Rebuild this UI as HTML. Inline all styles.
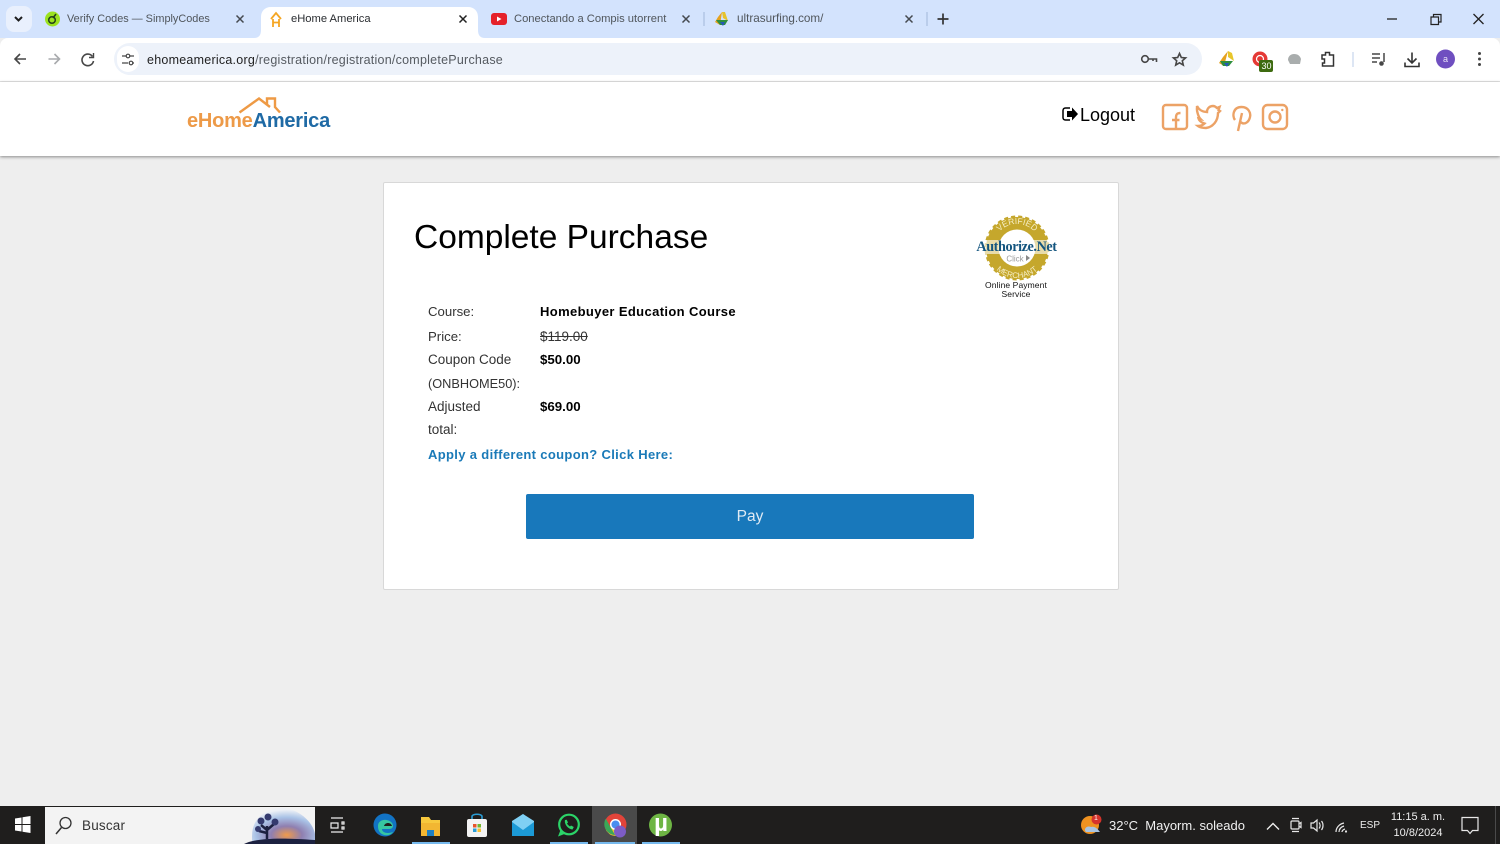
<!DOCTYPE html>
<html><head><meta charset="utf-8"><title>eHome America</title>
<style>
html,body{margin:0;padding:0;width:1500px;height:844px;overflow:hidden;background:#eeeeee;font-family:"Liberation Sans",sans-serif;}
.a{position:absolute;white-space:nowrap;}
svg{position:absolute;overflow:visible;}
.tab{font-size:11px;color:#50565c;line-height:14px;}
.row{font-size:13.500px;line-height:16px;color:#333;}
.b{font-weight:bold;color:#000;}
</style></head><body>
<!-- tab strip -->
<div class="a" style="left:0;top:0;width:1500px;height:38px;background:#d3e3fd"></div>
<div class="a" style="left:6px;top:6px;width:26px;height:26px;border-radius:8px;background:#e9f0fd"></div>
<svg style="left:0;top:0" width="1500" height="38">
<path d="M15 17l3.500 3.500 3.500-3.500" fill="none" stroke="#1f1f1f" stroke-width="2"/>
<path d="M254 38c5 0 7-3 7-8V17c0-6 4-10 10-10h197c6 0 10 4 10 10v13c0 5 2 8 7 8z" fill="#fff"/>
<circle cx="52.500" cy="19" r="7.500" fill="#9be21f"/><circle cx="52" cy="20" r="3.300" fill="none" stroke="#24401a" stroke-width="1.500"/><path d="M53 18l3-4" stroke="#24401a" stroke-width="1.500"/>
<path d="M271 19l5-6 5 6M273 19v8M279 19v8M273 22.500h6" fill="none" stroke="#f5a623" stroke-width="1.800"/>
<rect x="491" y="13" width="16" height="12" rx="3" fill="#e5212a"/><path d="M497 16.500l4.500 2.500-4.500 2.500z" fill="#fff"/>
<path d="M722 12l-4 5-3 5 5 3z" fill="#e5a21f"/><path d="M722 12l1 6 5 3-3-9z" fill="#e6c22b"/><path d="M716 20l12 0-3 5h-5z" fill="#2f8f3e"/><path d="M720 22h5l-2 4z" fill="#2559b5"/>
<g stroke="#454a50" stroke-width="1.500" fill="none"><path d="M236.500 15.500l7 7M243.500 15.500l-7 7"/><path d="M682.500 15.500l7 7M689.500 15.500l-7 7"/><path d="M905.500 15.500l7 7M912.500 15.500l-7 7"/></g>
<path d="M459.500 15.500l7 7M466.500 15.500l-7 7" stroke="#222" stroke-width="1.500"/>
<path d="M704 12v14M927 12v14" stroke="#a9bfdf" stroke-width="1.200"/>
<path d="M943 13.500v11M937.500 19h11" stroke="#333" stroke-width="1.700"/>
<path d="M1387 19h10" stroke="#222" stroke-width="1.300"/>
<path d="M1431 17h7.500v7.500h-7.500zM1433.500 17v-2.500h7.500v7.500h-2.500" fill="none" stroke="#222" stroke-width="1.200"/>
<path d="M1473.500 14l10 10M1483.500 14l-10 10" stroke="#222" stroke-width="1.300"/>
</svg>
<div class="a tab" style="left:67px;top:12px;font-size:10.900px">Verify Codes — SimplyCodes</div>
<div class="a tab" style="left:291px;top:12px;color:#2a2d31;font-size:11.200px">eHome America</div>
<div class="a tab" style="left:514px;top:12px;width:154px;overflow:hidden;font-size:11.200px">Conectando a Compis utorrent</div>
<div class="a tab" style="left:737px;top:12px;font-size:11.700px">ultrasurfing.com/</div>
<!-- toolbar -->
<div class="a" style="left:0;top:38px;width:1500px;height:43px;background:#fff;border-radius:8px 8px 0 0;border-bottom:1px solid #e3e3e3"></div>
<div class="a" style="left:114px;top:43px;width:1088px;height:32px;border-radius:16px;background:#edf2fa"></div>
<div class="a" style="left:117px;top:46px;width:22px;height:26px;border-radius:13px;background:#fff"></div>
<div class="a" style="left:147px;top:53px;font-size:12.500px;line-height:15px;color:#555a60;letter-spacing:.24px"><span style="color:#1f1f1f">ehomeamerica.org</span>/registration/registration/completePurchase</div>
<svg style="left:0;top:38px" width="1500" height="44">
<g fill="none" stroke="#474747" stroke-width="1.600">
<path d="M26 21H15.500M20 16l-5 5 5 5"/>
<path d="M92.500 18.500a5.800 5.800 0 1 0 1 4.500" /><path d="M93.500 15v4.500H89" stroke-width="1.400"/>
<path d="M122 18h4M130 18h4M122 25h6M133 25h1" stroke-width="1.200"/><circle cx="128" cy="18" r="1.800" stroke-width="1.200"/><circle cx="131" cy="25" r="1.800" stroke-width="1.200"/>
<circle cx="1145" cy="21" r="3.300" stroke-width="1.600"/><path d="M1148.500 21h8v3M1153 21v2"/>
<path d="M1179.500 15.500l1.800 4 4.300.4-3.300 2.900 1 4.300-3.800-2.300-3.800 2.300 1-4.300-3.300-2.900 4.300-.4z"/>
<path d="M1322 17h3.500v-2.500h4v2.500h4v11h-11v-3h2v-4h-2.500z" stroke-width="1.500" stroke="#333"/>
<path d="M1372 16h8M1372 20h8M1372 24h5" stroke-width="1.400"/><path d="M1384 15v9" stroke-width="1.500"/>
<path d="M1412 14.500v10M1407.500 20.500l4.500 4.500 4.500-4.500M1405 24.500v4h14v-4" stroke="#333"/>
</g>
<circle cx="1381.500" cy="25.500" r="2.300" fill="#474747"/>
<path d="M48.500 21H59M54.500 16l5 5-5 5" fill="none" stroke="#a8aaad" stroke-width="1.600"/>
<path d="M1228 13l-5 6-4 6 5 3z" fill="#e5a21f"/><path d="M1228 13l0 6 6 4-2-8z" fill="#e8c62b"/><path d="M1220 23h13l-4 5h-6z" fill="#2f8f3e"/><path d="M1224 25h5l-2 4z" fill="#2559b5"/>
<circle cx="1260" cy="21" r="7.500" fill="#e53935"/><circle cx="1260" cy="21" r="3.500" fill="none" stroke="#fff" stroke-width="1.200"/>
<rect x="1259" y="22" width="14" height="12" rx="2" fill="#3e6b10"/>
<path d="M1288 22c0-4 3-6 6-6 4 0 6 2 7 5l-1 5h-10z" fill="#a9adad"/>
<path d="M1353 14v15" stroke="#c6d6ec" stroke-width="1.200"/>
<circle cx="1445.500" cy="21" r="9.500" fill="#6f4fc0"/>
<circle cx="1479.500" cy="15.500" r="1.500" fill="#444"/><circle cx="1479.500" cy="21" r="1.500" fill="#444"/><circle cx="1479.500" cy="26.500" r="1.500" fill="#444"/>
</svg>
<div class="a" style="left:1261px;top:61px;width:11px;text-align:center;font-size:9px;line-height:11px;color:#fff">30</div>
<div class="a" style="left:1436px;top:53px;width:19px;text-align:center;font-size:9px;line-height:12px;color:#e9e2f7">a</div>
<!-- site header -->
<div class="a" style="left:0;top:82px;width:1500px;height:74px;background:#fff;box-shadow:0 1px 3px #8a8a8a"></div>
<svg style="left:0;top:82px" width="1500" height="74">
<path d="M239.500 30.500L259 16.500 270 25M267 22V16.500h8V25l5 5.500" fill="none" stroke="#ee9a45" stroke-width="2.400"/>
<g fill="none" stroke="#eca266" stroke-width="2.400">
<rect x="1163" y="23" width="24" height="24" rx="3"/>
<path d="M1176 47V35.500c0-3 1-4.500 4.500-4.500M1172 38h7.500"/>
<path d="M1197 24c2 4 6 6 10 6 0-4 3-6 6-6 2 0 3 1 4 2l2.500-1-1 3 1.500 1-2 2c0 8-5 14-12 15-3 0-6-.5-8-2 3 0 5-1 6.500-2.500-3-1-5.500-3-6-5l2 .5c-2-2-4-8-3.500-11z"/>
<path d="M1238 49l4-18M1235 38c-3-4-2-13 6.500-13 7 0 9.500 6 8.500 10-1 5-5 7.500-8 6-1-.5-1.500-1-2-2"/>
<rect x="1263" y="23" width="24" height="24" rx="4.500"/><circle cx="1275" cy="35" r="5.500"/>
</g>
<circle cx="1282.300" cy="28" r="1.200" fill="#eca266"/>
<path d="M1070 26h-4.500c-1.500 0-2.500 1-2.500 2.500v7c0 1.500 1 2.500 2.500 2.500h4.500" fill="none" stroke="#000" stroke-width="1.500"/>
<path d="M1067 29h5v-3.500l6 6.500-6 6.500v-3.500h-5z" fill="#000"/>
</svg>
<div class="a" style="left:187px;top:110px;font-size:20px;line-height:22px;font-weight:bold;letter-spacing:-.22px;color:#ed9a48">eHome<span style="color:#1f6aa5">America</span></div>
<div class="a" style="left:1080px;top:105px;font-size:18px;line-height:21px;color:#000">Logout</div>
<!-- card -->
<div class="a" style="left:383px;top:182px;width:734px;height:406px;background:#fff;border:1px solid #d8d8d8;border-radius:2px"></div>
<div class="a" style="left:414px;top:218px;font-size:33.500px;line-height:40px;color:#000">Complete Purchase</div>
<div class="a row" style="left:428px;top:304px;font-size:13.200px">Course:</div>
<div class="a row b" style="left:540px;top:304px;font-size:13px;letter-spacing:.37px">Homebuyer Education Course</div>
<div class="a row" style="left:428px;top:329px;font-size:13.200px">Price:</div>
<div class="a row" style="left:540px;top:329px;text-decoration:line-through">$119.00</div>
<div class="a row" style="left:428px;top:352px">Coupon Code</div>
<div class="a row b" style="left:540px;top:352px;font-size:13.300px">$50.00</div>
<div class="a row" style="left:428px;top:376px;font-size:12.750px">(ONBHOME50):</div>
<div class="a row" style="left:428px;top:399px;font-size:13.500px">Adjusted</div>
<div class="a row b" style="left:540px;top:399px;font-size:13.300px">$69.00</div>
<div class="a row" style="left:428px;top:422px">total:</div>
<div class="a row" style="left:428px;top:447px;font-size:13px;font-weight:bold;color:#1a7ab8;letter-spacing:.34px">Apply a different coupon? Click Here:</div>
<div class="a" style="left:526px;top:494px;width:448px;height:45px;background:#1878bb;border-radius:2px;color:#dfeaf4;font-size:15.500px;line-height:45px;text-align:center">Pay</div>
<!-- seal -->
<svg style="left:976px;top:214px" width="82" height="70">
<defs>
<path id="arcT" d="M17 34a24 24 0 0 1 48 0"/>
<path id="arcB" d="M11 34a30 30 0 0 0 60 0"/>
</defs>
<circle cx="41" cy="34" r="31" fill="#c5a72c" stroke="#c5a72c" stroke-width="3" stroke-dasharray="4 3"/>
<circle cx="41" cy="34" r="18.500" fill="#fff"/>
<rect x="0" y="26" width="82" height="14" fill="#fff" opacity=".6"/>
<text font-family="Liberation Sans" font-size="8.500" fill="#f5edc4" text-anchor="middle"><textPath href="#arcT" startOffset="50%">VERIFIED</textPath></text>
<text font-family="Liberation Sans" font-size="8" fill="#f5edc4" text-anchor="middle"><textPath href="#arcB" startOffset="50%">MERCHANT</textPath></text>
<text x="40.500" y="37" text-anchor="middle" font-family="Liberation Serif" font-weight="bold" font-size="14.200" letter-spacing="-.4" fill="#14557f">Authorize.Net</text>
<text x="39" y="47.500" text-anchor="middle" font-family="Liberation Sans" font-size="8" fill="#9a9a9a">Click</text>
<path d="M50 41l4 3-4 3z" fill="#888"/>
</svg>
<div class="a" style="left:966px;top:281px;width:100px;text-align:center;font-size:8.500px;line-height:9px;color:#111;letter-spacing:.1px">Online Payment<br>Service</div>
<!-- taskbar -->
<div class="a" style="left:0;top:806px;width:1500px;height:38px;background:#1f1e1d"></div>
<div class="a" style="left:45px;top:807px;width:270px;height:37px;background:#f3f3f3"></div>
<div class="a" style="left:592px;top:806px;width:45px;height:38px;background:#4a4a4a"></div>
<svg style="left:0;top:806px" width="1500" height="38">
<path d="M15 12.500l6.500-1v6.500H15zM22.500 11.300l8-1.300v8h-8zM15 19h6.500v6.500l-6.500-1zM22.500 19h8v8l-8-1.300z" fill="#fff"/>
<circle cx="65.500" cy="17" r="5.500" fill="none" stroke="#333" stroke-width="1.300"/><path d="M61.500 21.500L56 28" stroke="#333" stroke-width="1.500"/>
<defs><radialGradient id="g" cx=".55" cy=".75" r=".7"><stop offset="0" stop-color="#f09a4a"/><stop offset=".35" stop-color="#8f7fb0"/><stop offset=".7" stop-color="#a9c2e6"/><stop offset="1" stop-color="#eef1f6"/></radialGradient></defs>
<path d="M252 30c0-18 14-28 30-28s31 14 33 26v10h-63z" fill="url(#g)"/>
<path d="M244 38c10-5 30-7 71-4v4z" fill="#1c2140"/>
<path d="M267 33v-13M267 24l-6-5M267 24l7-6M267 27l-8-2" stroke="#1c2140" stroke-width="2.500" fill="none"/>
<circle cx="261" cy="15" r="3.500" fill="#343a6e"/><circle cx="268" cy="11" r="3.500" fill="#343a6e"/><circle cx="275" cy="16" r="3.500" fill="#343a6e"/><circle cx="258" cy="23" r="3" fill="#343a6e"/>
<path d="M331 12h12M331 26h12M331 17h7v5h-7zM342 16h2v2h-2zM342 21h2v2h-2z" fill="none" stroke="#eee" stroke-width="1.200"/>
<circle cx="385" cy="19" r="11.500" fill="#1273c4"/>
<path d="M378 20c0-7 10-8 14-3 2 3 1 6-3 6h-7c0 4 6 5 11 3-3 5-15 5-15-6z" fill="#37c6a2"/>
<path d="M384 20c1-4 7-4 8 0z" fill="#1f1e1d"/>
<path d="M421 11h8l2 3h9v16h-19z" fill="#f7c83d"/><path d="M421 17h19v13h-19z" fill="#f2b632"/><path d="M427 24h7v6h-7z" fill="#1c7fc4"/>
<rect x="467" y="13" width="20" height="18" rx="2" fill="#f3f3f3"/><path d="M472 13v-2.500c0-3 10-3 10 0V13" fill="none" stroke="#2a9dd6" stroke-width="1.600"/>
<rect x="473" y="18" width="3.500" height="3.500" fill="#e8542b"/><rect x="477.500" y="18" width="3.500" height="3.500" fill="#74b72e"/><rect x="473" y="22.500" width="3.500" height="3.500" fill="#2a9dd6"/><rect x="477.500" y="22.500" width="3.500" height="3.500" fill="#f7c032"/>
<path d="M512 16l11-8 11 8v14h-22z" fill="#1c9ad6"/><path d="M512 16l11 8 11-8v-1l-11-7-11 7z" fill="#7fd0f4"/>
<circle cx="569" cy="18.500" r="9.800" fill="none" stroke="#2bd468" stroke-width="2.200"/><path d="M560.500 24l-2.500 6.500 6.500-2.500z" fill="#2bd468"/>
<path d="M565 14c-1 4 3 9 7.500 9.500l1.300-2.500-2.800-1.500-1 1c-1.500-1-2.500-2-3-3l1-1-1.300-2.800z" fill="#2bd468"/>
<circle cx="615.500" cy="18.500" r="11" fill="#e2443a"/>
<path d="M615.500 18.500L625 24a11 11 0 0 1-15 4.500l-4-4z" fill="#edc12f"/>
<path d="M606 13l5 9 4 7a11 11 0 0 1-9.500-16z" fill="#3aa757"/>
<circle cx="615.500" cy="18.500" r="4.800" fill="#4a8ef0" stroke="#fff" stroke-width="1.500"/>
<circle cx="620" cy="25.500" r="6" fill="#7d5cc6"/>
<circle cx="660.500" cy="19" r="11.500" fill="#6eb544"/>
<rect x="412" y="36" width="38" height="2" fill="#76b9ed"/>
<rect x="550" y="36" width="38" height="2" fill="#76b9ed"/><rect x="595" y="36" width="40" height="2" fill="#76b9ed"/><rect x="642" y="36" width="38" height="2" fill="#76b9ed"/>
<circle cx="1090" cy="19" r="9" fill="#ef9220"/><path d="M1086 26c-3-3 1-7 5-5 3-1 6 1 9 5z" fill="#a9c4e0"/>
<circle cx="1096.500" cy="13.500" r="5" fill="#d5332b"/>
<path d="M1267 23.500l6-6 6 6" fill="none" stroke="#eee" stroke-width="1.400"/>
<g fill="none" stroke="#e8e8e8" stroke-width="1.200">
<rect x="1291" y="15" width="8" height="8" rx="1"/><path d="M1299.500 17.500l1.500-1v5l-1.500-1M1292 12.500h7M1292 25.500h7"/>
<path d="M1311 17h2.500l3.500-3v11l-3.500-3H1311zM1319 16.500c1.500 1.500 1.500 4.500 0 6M1321.500 15c2 2.500 2 6.500 0 9"/>
<path d="M1336 26c0-4 3-8 8-9M1339 26c0-3 2-5 5-6M1342 26c0-1 1-2.500 3-3"/>
<path d="M1462 11.500h16v13h-5.500l-2.500 3-2.500-3h-5.500z"/>
</g>
<circle cx="1346" cy="25.500" r="1.100" fill="#e8e8e8"/>
<path d="M1495.500 0v38" stroke="#4a4a4a"/>
</svg>
<div class="a" style="left:650px;top:810px;width:22px;text-align:center;font-size:24px;line-height:28px;font-weight:bold;color:#fff">µ</div>
<div class="a" style="left:82px;top:817px;font-size:13.500px;line-height:18px;color:#333;letter-spacing:.2px">Buscar</div>
<div class="a" style="left:1094px;top:814px;width:5px;font-size:7px;line-height:9px;color:#fff">1</div>
<div class="a" style="left:1109px;top:817px;font-size:13px;line-height:17px;color:#f0f0f0">32°C&nbsp; Mayorm. soleado</div>
<div class="a" style="left:1360px;top:819px;font-size:10px;line-height:13px;color:#eee">ESP</div>
<div class="a" style="left:1388px;top:809px;width:60px;text-align:center;font-size:11px;line-height:16px;color:#eee">11:15 a. m.<br>10/8/2024</div>
</body></html>
